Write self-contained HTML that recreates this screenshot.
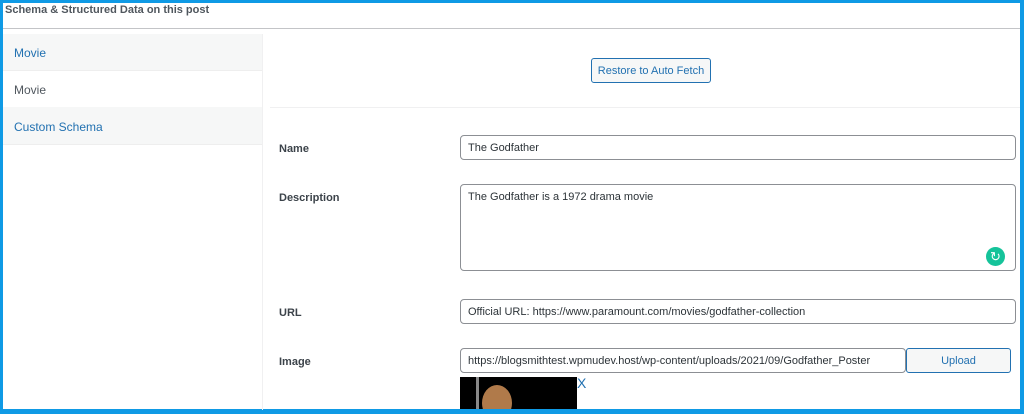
<!DOCTYPE html>
<html><head><style>
body{margin:0;width:1024px;height:414px;overflow:hidden;background:#fff;font-family:"Liberation Sans",sans-serif;position:relative}
.a{position:absolute}
.in{position:absolute;border:1px solid #8c8f94;border-radius:4px;background:#fff;font-size:11px;color:#2c3338;box-sizing:border-box;padding-left:7px}
.lb{position:absolute;left:279px;font-size:11px;font-weight:bold;color:#3c434a}
</style></head><body>
<div class="a" style="left:0;top:0;width:1024px;height:414px;box-sizing:border-box;border:3px solid #0f9ae5;border-right-width:4px;border-bottom-width:5px"></div>
<div class="a" style="left:5px;top:4px;font-size:11px;font-weight:bold;color:#50575e">Schema &amp; Structured Data on this post</div>
<div class="a" style="left:3px;top:28px;width:1017px;height:1px;background:#c3c4c7"></div>
<div class="a" style="left:3px;top:34px;width:259px;height:36px;background:#f6f7f7;border-bottom:1px solid #eee"></div>
<div class="a" style="left:14px;top:46px;font-size:12px;color:#2271b1">Movie</div>
<div class="a" style="left:14px;top:83px;font-size:12px;color:#50575e">Movie</div>
<div class="a" style="left:3px;top:107px;width:259px;height:37px;background:#f6f7f7;border-bottom:1px solid #eee"></div>
<div class="a" style="left:14px;top:120px;font-size:12px;color:#2271b1">Custom Schema</div>
<div class="a" style="left:262px;top:34px;width:1px;height:376px;background:#f0f0f1"></div>
<div class="a" style="left:591px;top:58px;width:120px;height:25px;box-sizing:border-box;border:1px solid #2271b1;border-radius:3px;background:#f6f7f7;color:#2271b1;font-size:11px;text-align:center;line-height:25px">Restore to Auto Fetch</div>
<div class="a" style="left:270px;top:107px;width:750px;height:1px;background:#f0f0f1"></div>
<div class="lb" style="top:143px">Name</div>
<div class="in" style="left:460px;top:135px;width:556px;height:25px;line-height:25px">The Godfather</div>
<div class="lb" style="top:192px">Description</div>
<div class="in" style="left:460px;top:184px;width:556px;height:87px;padding-top:6px">The Godfather is a 1972 drama movie</div>
<div class="a" style="left:986px;top:247px;width:19px;height:19px;border-radius:50%;background:#15c39a;color:#fff;font-size:13px;text-align:center;line-height:19px">↻</div>
<div class="lb" style="top:307px">URL</div>
<div class="in" style="left:460px;top:299px;width:556px;height:25px;line-height:25px">Official URL: https://www.paramount.com/movies/godfather-collection</div>
<div class="lb" style="top:356px">Image</div>
<div class="in" style="left:460px;top:348px;width:446px;height:25px;line-height:25px;overflow:hidden;white-space:nowrap">https://blogsmithtest.wpmudev.host/wp-content/uploads/2021/09/Godfather_Poster</div>
<div class="a" style="left:906px;top:348px;width:105px;height:25px;box-sizing:border-box;border:1px solid #2271b1;border-radius:3px;background:#f6f7f7;color:#2271b1;font-size:11px;text-align:center;line-height:25px">Upload</div>
<div class="a" style="left:460px;top:377px;width:117px;height:32px;background:#000;overflow:hidden"><div class="a" style="left:22px;top:8px;width:30px;height:36px;border-radius:50%;background:#b07a4a"></div><div class="a" style="left:16px;top:0;width:3px;height:32px;background:#888"></div></div>
<div class="a" style="left:577px;top:375px;font-size:14px;color:#2271b1">X</div>
</body></html>
